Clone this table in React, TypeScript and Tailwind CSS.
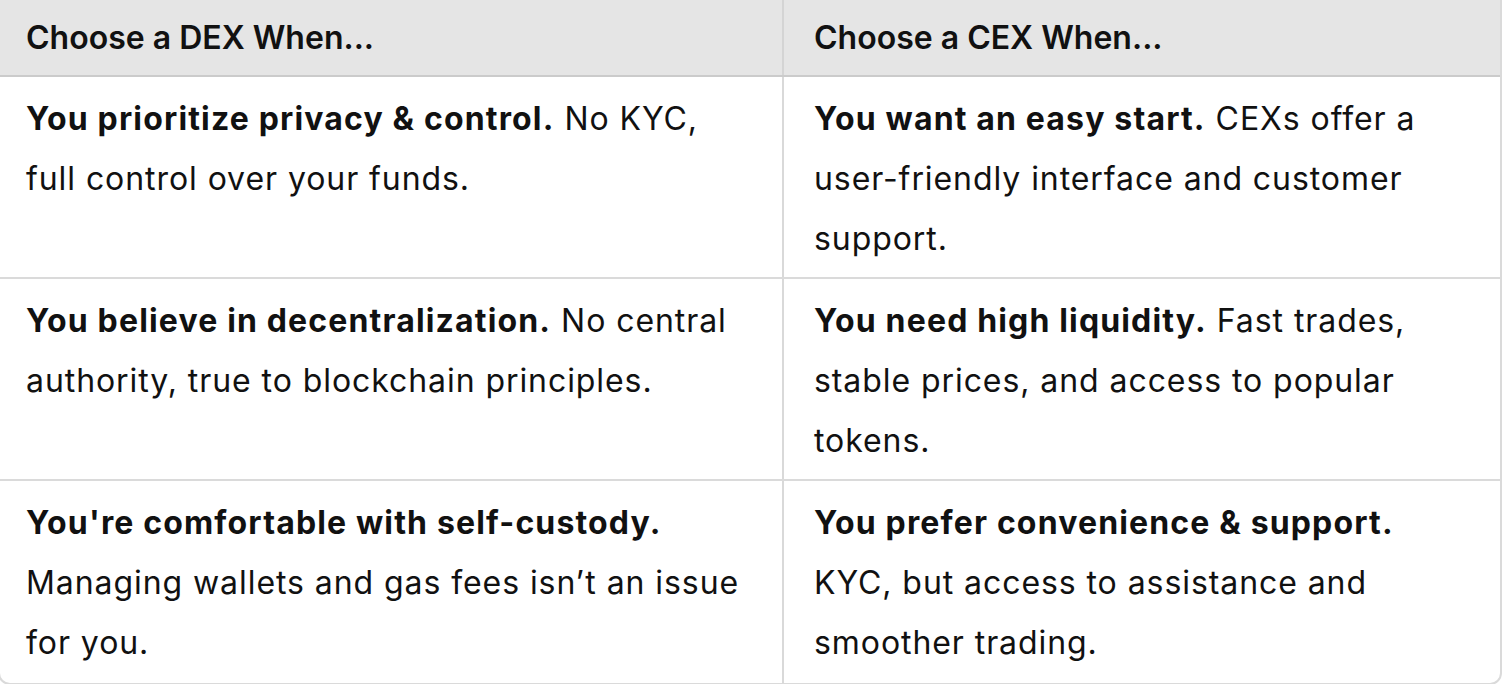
import React from "react";

type Cell = { bold: string; lines: string[] };

const rows: { dex: Cell; cex: Cell }[] = [
  {
    dex: { bold: "You prioritize privacy & control.", lines: [" No KYC,", "full control over your funds."] },
    cex: { bold: "You want an easy start.", lines: [" CEXs offer a", "user-friendly interface and customer", "support."] },
  },
  {
    dex: { bold: "You believe in decentralization.", lines: [" No central", "authority, true to blockchain principles."] },
    cex: { bold: "You need high liquidity.", lines: [" Fast trades,", "stable prices, and access to popular", "tokens."] },
  },
  {
    dex: { bold: "You're comfortable with self-custody.", lines: ["", "Managing wallets and gas fees isn\u2019t an issue", "for you."] },
    cex: { bold: "You prefer convenience & support.", lines: ["", "KYC, but access to assistance and", "smoother trading."] },
  },
];

function CellContent({ cell }: { cell: Cell }) {
  return (
    <>
      <div className="whitespace-pre">
        <span className="font-bold tracking-[0.036em]">{cell.bold}</span>
        {cell.lines[0]}
      </div>
      {cell.lines.slice(1).map((l, i) => (
        <div key={i} className="whitespace-pre">
          {l}
        </div>
      ))}
    </>
  );
}

export default function App() {
  return (
    <div
      className="w-[1502px] h-[684px] overflow-hidden bg-white text-[#111111]"
      style={{ fontFamily: "Inter, 'Noto Sans', sans-serif" }}
    >
      <div className="ml-[-2px] mt-[-2px] w-[1504px] border-2 border-[#dadada] rounded-b-[12px] overflow-hidden">
        <div className="grid grid-cols-[784px_1fr] bg-[#e5e5e5] border-b-2 border-[#cbcbcb] h-[77px]">
          <div className="flex items-center pl-[26px] text-[32px] font-semibold border-r-2 border-[#d4d4d4]">
            Choose a DEX When...
          </div>
          <div className="flex items-center pl-[30px] text-[32px] font-semibold">
            Choose a CEX When...
          </div>
        </div>
        {rows.map((r, i) => (
          <div
            key={i}
            className={
              "grid grid-cols-[784px_1fr] h-[202px] " +
              (i < rows.length - 1 ? "border-b-2 border-[#dadada]" : "")
            }
          >
            <div className="pl-[26px] pt-[12px] text-[32px] leading-[60px] tracking-[0.029em] border-r-2 border-[#d9d9d9]">
              <CellContent cell={r.dex} />
            </div>
            <div className="pl-[30px] pt-[12px] text-[32px] leading-[60px] tracking-[0.029em]">
              <CellContent cell={r.cex} />
            </div>
          </div>
        ))}
      </div>
    </div>
  );
}
